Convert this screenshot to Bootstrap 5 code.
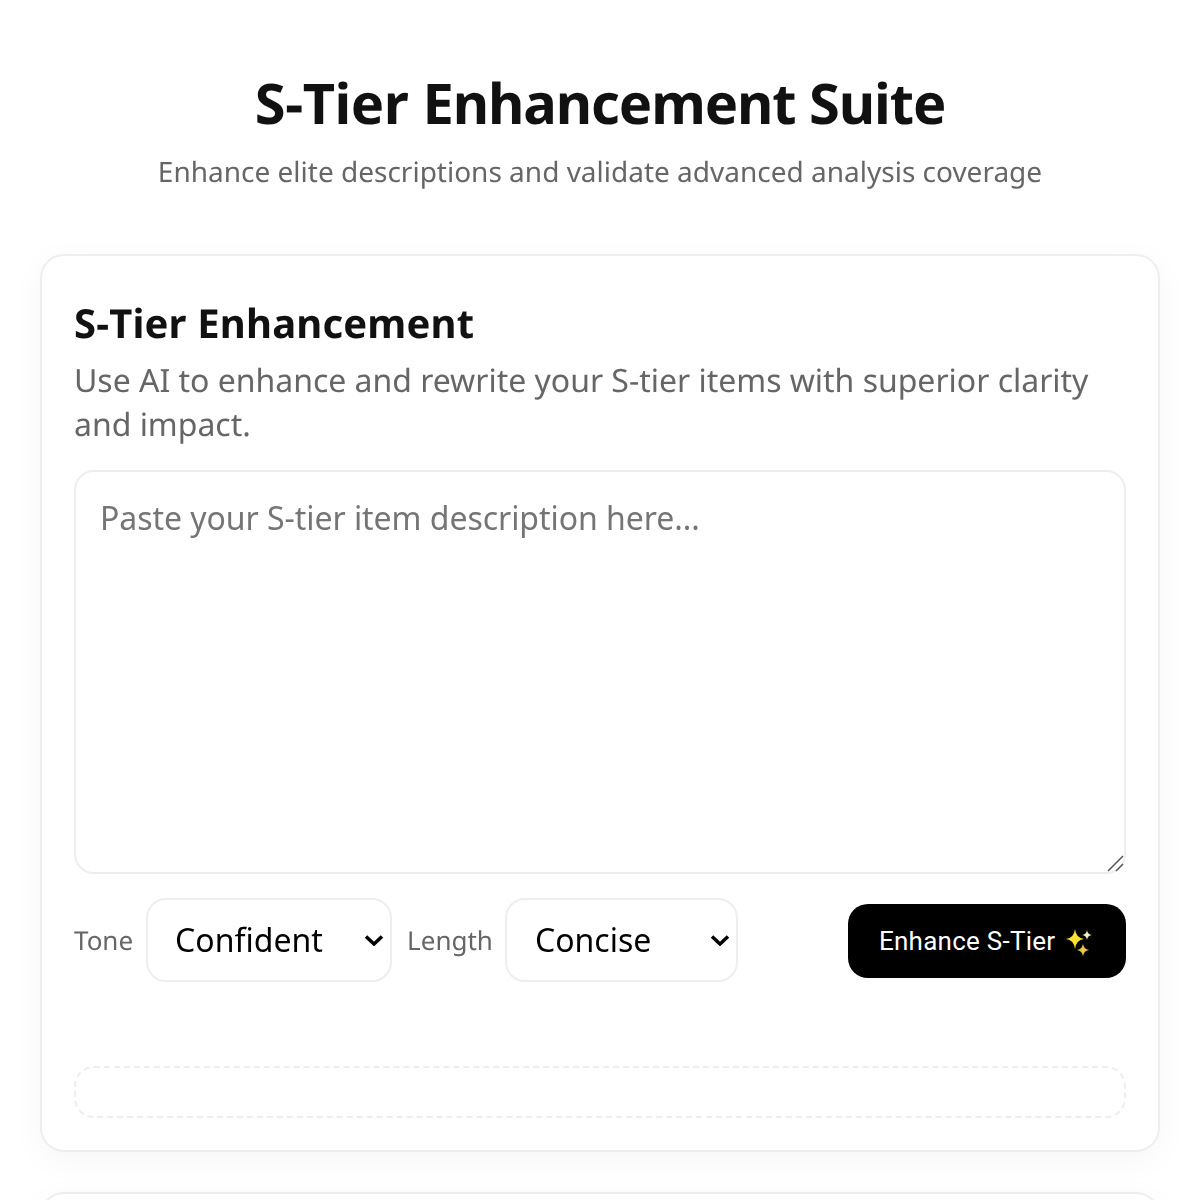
<!DOCTYPE html>
<html lang="en">
<head>
<meta charset="utf-8">
<title>S-Tier Enhancement Suite</title>
<link href="https://cdn.jsdelivr.net/npm/bootstrap@5.3.0/dist/css/bootstrap.min.css" rel="stylesheet">
<style>
html,body{height:1200px;overflow:hidden;background:#fff}
body{font-family:"Noto Sans",sans-serif;color:#111;text-rendering:geometricPrecision}
.suite-wrap{padding:71px 40px 0;will-change:opacity}
.suite-title{font-size:56px;font-weight:700;line-height:64px;color:#111;margin:0 0 17px;letter-spacing:-1.1px;font-kerning:none}
.title-lead{letter-spacing:-.45px}
.suite-sub{font-size:28px;line-height:40px;color:#666;margin:0 0 62px}
.panel{border:2px solid #eee;border-radius:24px;background:#fff;padding:43px 32px 32px;box-shadow:0 8px 32px rgba(0,0,0,.04)}
.panel + .panel{margin-top:40px;height:200px}
.panel-title{font-size:40px;line-height:48px;font-weight:700;color:#111;margin:0 0 12px;font-kerning:none;letter-spacing:.17px}
.panel-desc{font-size:32px;line-height:44px;color:#666;margin:0 0 23px;letter-spacing:-.025px}
.prompt-area{display:block}
.prompt-box{height:404px;border:2px solid #eee;border-radius:20px;padding:24px;font-size:32px;line-height:44px;color:#111;box-shadow:none;display:block;resize:none;letter-spacing:-.05px}
.prompt-box::placeholder{color:#757575}
.grip{position:absolute;right:2px;bottom:2px;width:17px;height:17px}
.ctl-label{font-size:26px;color:#666}
.lbl-tone{margin-right:13px}
.lbl-len{margin:0 12px 0 15px}
.ctl-select{height:84px;border:2px solid #eee;border-radius:20px;font-size:32px;line-height:44px;color:#000;padding:0 0 0 28px;background-size:20px 12px;background-position:right 6px center;background-image:url("data:image/svg+xml,%3Csvg xmlns='http://www.w3.org/2000/svg' viewBox='0 0 20 12'%3E%3Cpath d='M2 2.500 10 10 18 2.500' fill='none' stroke='%23000' stroke-width='3.500'/%3E%3C/svg%3E")}
.sel-tone{width:246px;padding-left:27px}
.sel-len{width:233px}
.go-btn{height:74px;width:278px;background:#000;color:#fff;border:0;border-radius:20px;font-family:Roboto,sans-serif;font-size:26px;letter-spacing:.01em;padding:0;margin-top:2px}
.go-btn svg{width:32px;height:32px;vertical-align:-8px;margin-left:1px}
.output-box{height:52px;margin-top:84px;border:2px dashed #eee;border-radius:20px}
</style>
</head>
<body>
<div class="suite-wrap">
  <header class="text-center">
    <h1 class="suite-title"><span class="title-lead">S-Tier </span>Enhancement Suite</h1>
    <p class="suite-sub">Enhance elite descriptions and validate advanced analysis coverage</p>
  </header>
  <section class="panel">
    <h2 class="panel-title">S-Tier Enhancement</h2>
    <p class="panel-desc">Use AI to enhance and rewrite your S-tier items with superior clarity and impact.</p>
    <div class="prompt-area position-relative">
      <textarea class="form-control prompt-box" placeholder="Paste your S-tier item description here..."></textarea>
      <svg class="grip" viewBox="0 0 17 17" aria-hidden="true"><path d="M1 16 16 1M9 16 16 9" fill="none" stroke="#555" stroke-width="1.500"/></svg>
    </div>
    <div class="d-flex align-items-center mt-4">
      <label class="ctl-label lbl-tone" for="tone">Tone</label>
      <select id="tone" class="form-select ctl-select sel-tone"><option>Confident</option></select>
      <label class="ctl-label lbl-len" for="len">Length</label>
      <select id="len" class="form-select ctl-select sel-len"><option>Concise</option></select>
      <button class="go-btn ms-auto" type="button">Enhance S-Tier <svg viewBox="0 0 32 32" aria-hidden="true"><path d="M12 3Q13 12 21 13 13 14 12 23 11 14 3 13 11 12 12 3Z" fill="#fde030"/><path d="M24 4Q24.500 8.500 29 9 24.500 9.500 24 14 23.500 9.500 19 9 23.500 8.500 24 4Z" fill="#f3eebb"/><path d="M20 17.500Q20.600 23.400 26 24 20.600 24.600 20 30.500 19.400 24.600 14 24 19.400 23.400 20 17.500Z" fill="#ecc445"/></svg></button>
    </div>
    <div class="output-box"></div>
  </section>
  <section class="panel"></section>
</div>
<script src="https://cdn.jsdelivr.net/npm/bootstrap@5.3.0/dist/js/bootstrap.bundle.min.js"></script>
</body>
</html>
